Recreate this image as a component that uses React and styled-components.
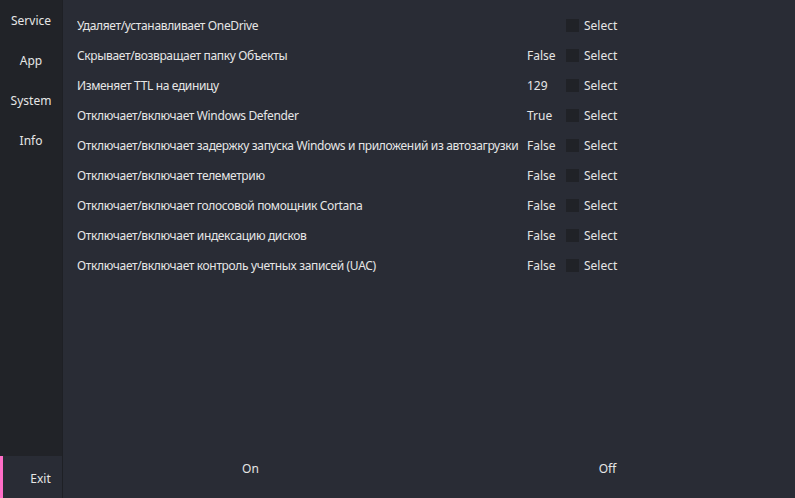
import React from "react";
import styled, { createGlobalStyle } from "styled-components";

const GlobalStyle = createGlobalStyle`
  html, body {
    margin: 0;
    padding: 0;
    background: #292c35;
  }
  body {
    font-family: "Noto Sans", "Open Sans", sans-serif;
    font-size: 12px;
    color: #e6e6e6;
  }
`;

const rows = [
  { label: "Удаляет/устанавливает OneDrive", value: "" },
  { label: "Скрывает/возвращает папку Объекты", value: "False" },
  { label: "Изменяет TTL на единицу", value: "129" },
  { label: "Отключает/включает Windows Defender", value: "True" },
  {
    label: "Отключает/включает задержку запуска Windows и приложений из автозагрузки",
    value: "False"
  },
  { label: "Отключает/включает телеметрию", value: "False" },
  { label: "Отключает/включает голосовой помощник Cortana", value: "False" },
  { label: "Отключает/включает индексацию дисков", value: "False" },
  { label: "Отключает/включает контроль учетных записей (UAC)", value: "False" }
];

const Window = styled.div`
  display: flex;
  width: 795px;
  height: 498px;
  overflow: hidden;
`;

const Sidebar = styled.nav`
  display: flex;
  flex-direction: column;
  width: 62px;
  background: #212328;
  border-right: 1px solid #1e2025;
`;

const NavItem = styled.div`
  height: 40px;
  display: flex;
  align-items: center;
  justify-content: center;
  color: #e6e6e6;
`;

const ExitButton = styled.div`
  margin-top: auto;
  height: 40px;
  display: flex;
  align-items: center;
  justify-content: center;
  padding-left: 16px;
  background: #292c35;
  border-left: 3px solid #ff6ec7;
  padding-top: 2px;
`;

const Main = styled.main`
  flex: 1;
  display: flex;
  flex-direction: column;
  padding-top: 10px;
`;

const List = styled.div`
  display: flex;
  flex-direction: column;
`;

const Row = styled.div`
  display: grid;
  grid-template-columns: 450px 39px 13px auto;
  align-items: center;
  height: 30px;
  padding-left: 14px;
  white-space: nowrap;
`;

const Label = styled.span`
  letter-spacing: -0.35px;
  overflow: hidden;
`;

const Value = styled.span``;

const Box = styled.span`
  width: 13px;
  height: 13px;
  background: #202227;
`;

const Select = styled.span`
  padding-left: 5px;
`;

const Footer = styled.div`
  margin-top: auto;
  display: grid;
  grid-template-columns: 1fr 1fr;
  height: 40px;
  margin-bottom: 10px;
  padding: 0 9px;
`;

const FooterButton = styled.div`
  display: flex;
  align-items: center;
  justify-content: center;
`;

export default function App() {
  return (
    <>
      <GlobalStyle />
      <Window>
        <Sidebar>
          <NavItem>Service</NavItem>
          <NavItem>App</NavItem>
          <NavItem>System</NavItem>
          <NavItem>Info</NavItem>
          <ExitButton>Exit</ExitButton>
        </Sidebar>
        <Main>
          <List>
            {rows.map((r) => (
              <Row key={r.label}>
                <Label>{r.label}</Label>
                <Value>{r.value}</Value>
                <Box />
                <Select>Select</Select>
              </Row>
            ))}
          </List>
          <Footer>
            <FooterButton>On</FooterButton>
            <FooterButton>Off</FooterButton>
          </Footer>
        </Main>
      </Window>
    </>
  );
}
